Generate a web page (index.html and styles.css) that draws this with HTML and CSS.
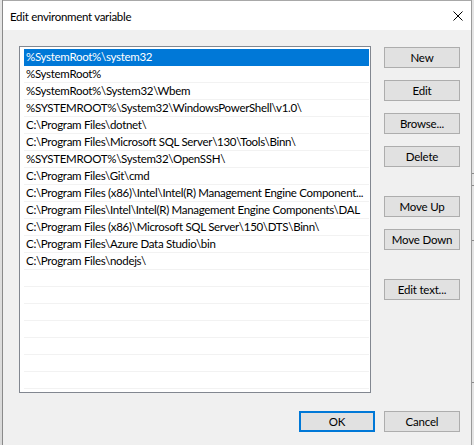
FILE: index.html
```html
<!DOCTYPE html>
<html>
<head>
<meta charset="utf-8">
<link rel="stylesheet" href="styles.css">
</head>
<body>
<div class="desktop">
  <div class="behind-left"></div>
  <div class="window">
    <div class="titlebar">
      <span class="title">Edit environment variable</span>
      <svg class="close" width="10" height="10" viewBox="0 0 10 10"><path d="M0.5 0.5 L9.5 9.5 M9.5 0.5 L0.5 9.5" stroke="#000" stroke-width="1" fill="none"/></svg>
    </div>
    <div class="content">
      <div class="main">
        <div class="listbox">
          <div class="row selected">%SystemRoot%\system32</div>
          <div class="row">%SystemRoot%</div>
          <div class="row">%SystemRoot%\System32\Wbem</div>
          <div class="row">%SYSTEMROOT%\System32\WindowsPowerShell\v1.0\</div>
          <div class="row">C:\Program Files\dotnet\</div>
          <div class="row">C:\Program Files\Microsoft SQL Server\130\Tools\Binn\</div>
          <div class="row">%SYSTEMROOT%\System32\OpenSSH\</div>
          <div class="row">C:\Program Files\Git\cmd</div>
          <div class="row">C:\Program Files (x86)\Intel\Intel(R) Management Engine Component...</div>
          <div class="row">C:\Program Files\Intel\Intel(R) Management Engine Components\DAL</div>
          <div class="row">C:\Program Files (x86)\Microsoft SQL Server\150\DTS\Binn\</div>
          <div class="row">C:\Program Files\Azure Data Studio\bin</div>
          <div class="row">C:\Program Files\nodejs\</div>
          <div class="row"></div>
          <div class="row"></div>
          <div class="row"></div>
          <div class="row"></div>
          <div class="row"></div>
          <div class="row"></div>
          <div class="row"></div>
        </div>
        <div class="side">
          <div class="group">
            <button class="btn">New</button>
            <button class="btn">Edit</button>
            <button class="btn">Browse...</button>
            <button class="btn">Delete</button>
          </div>
          <div class="group move">
            <button class="btn">Move Up</button>
            <button class="btn">Move Down</button>
          </div>
          <div class="group edit-text">
            <button class="btn">Edit text...</button>
          </div>
        </div>
      </div>
      <div class="footer">
        <button class="btn default">OK</button>
        <button class="btn">Cancel</button>
      </div>
    </div>
  </div>
  <div class="behind-right">
    <div class="tick t1"></div>
    <div class="tick t2"></div>
    <div class="tick t3"></div>
    <div class="tick t4"></div>
  </div>
</div>
</body>
</html>
```
FILE: styles.css
```css
html, body {
  margin: 0;
  padding: 0;
  width: 474px;
  height: 445px;
  overflow: hidden;
  font-family: Lato, "Liberation Sans", sans-serif;
  font-size: 11.5px;
  letter-spacing: -0.3px;
  color: #000;
}
.desktop {
  display: flex;
  width: 474px;
  height: 445px;
}
.behind-left {
  width: 3px;
  background: linear-gradient(#e6e6e6, #d9d9d9);
  border-right: 1px solid #8a8a8a;
}
.window {
  flex: 1;
  display: flex;
  flex-direction: column;
  border-top: 1px solid #a8a8a8;
  border-right: 1px solid #9a9a9a;
  background: #f0f0f0;
}
.titlebar {
  height: 29px;
  background: #fff;
  display: flex;
  align-items: center;
  justify-content: space-between;
  padding: 0 8px 0 7px;
  flex: none;
}
.title {
  font-size: 11.5px;
  margin-top: 1px;
}
.close {
  display: block;
  margin-top: 1px;
}
.content {
  flex: 1;
  display: flex;
  flex-direction: column;
  padding: 16px 11px 0 16px;
}
.main {
  display: flex;
  gap: 13px;
}
.listbox {
  width: 345px;
  height: 343px;
  border: 1px solid #828790;
  background: #fff;
  padding: 2px 1px 0 4px;
  box-sizing: content-box;
  overflow: hidden;
}
.row {
  height: 16px;
  line-height: 16px;
  border-bottom: 1px solid #f2f2f2;
  padding-left: 2px;
  white-space: nowrap;
  overflow: hidden;
}
.row.selected {
  background: #0078d7;
  color: #fff;
  border-bottom-color: #0078d7;
}
.side {
  display: flex;
  flex-direction: column;
  padding-top: 1px;
}
.group {
  display: flex;
  flex-direction: column;
  gap: 12px;
}
.move {
  margin-top: 29px;
}
.edit-text {
  margin-top: 29px;
}
.btn {
  width: 76px;
  height: 21px;
  box-sizing: border-box;
  border: 1px solid #adadad;
  background: #e1e1e1;
  font-family: Lato, "Liberation Sans", sans-serif;
  font-size: 11.5px;
  letter-spacing: -0.2px;
  color: #000;
  padding: 0;
  line-height: 19px;
}
.btn.default {
  border: 1px solid #0078d7;
  box-shadow: inset 0 0 0 1px #0078d7;
}
.footer {
  display: flex;
  justify-content: flex-end;
  gap: 9px;
  margin-top: 18px;
}
.behind-right {
  width: 3px;
  background: #e4e4e4;
  position: relative;
}
.tick {
  position: absolute;
  left: 0;
  width: 3px;
  height: 1px;
  background: #8c8c8c;
}
.t1 { top: 173px; }
.t2 { top: 185px; }
.t3 { top: 240px; }
.t4 { top: 382px; }
```
